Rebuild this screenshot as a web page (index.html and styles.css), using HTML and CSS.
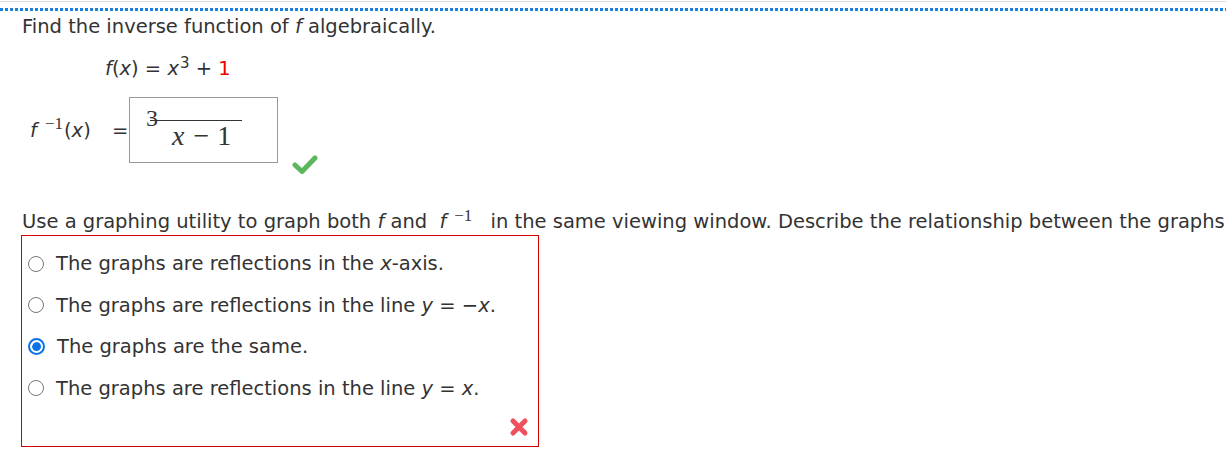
FILE: index.html
```html
<!DOCTYPE html>
<html lang="en">
<head>
    <meta charset="UTF-8">
    <title>Inverse Function</title>
    <link rel="stylesheet" href="styles.css">
</head>
<body>
    <div class="topline"></div>
    <div class="dotline"></div>
    <div class="question">
        <p class="prompt">Find the inverse function of <i>f</i> algebraically.</p>
        <div class="given"><i>f</i>(<i>x</i>) = <i>x</i><sup>3</sup> + <span class="red">1</span></div>

        <div class="answer-row">
            <span class="label"><i>f</i><sup class="mj">&minus;1</sup>(<i>x</i>)</span>
            <span class="eq">=</span>
            <div class="answer-box">
                <span class="root-index">3</span>
                <span class="radicand"><i>x</i><span class="minus">&minus;</span>1</span>
            </div>
            <svg class="check" width="26" height="20" viewBox="0 0 26 20">
                <path d="M3 10 L10 16.5 L23 3" fill="none" stroke="#5cb85c" stroke-width="5" stroke-linecap="round" stroke-linejoin="round"/>
            </svg>
        </div>

        <p class="prompt second">Use a graphing utility to graph both <i>f</i> and <span class="inv"><i>f</i><sup class="mj">&minus;1</sup></span> in the same viewing window. Describe the relationship between the graphs.</p>

        <div class="choices">
            <label class="choice"><span class="radio"></span><span>The graphs are reflections in the <i>x</i>-axis.</span></label>
            <label class="choice"><span class="radio"></span><span>The graphs are reflections in the line <i>y</i> = &minus;<i>x</i>.</span></label>
            <label class="choice"><span class="radio checked"></span><span>The graphs are the same.</span></label>
            <label class="choice"><span class="radio"></span><span>The graphs are reflections in the line <i>y</i> = <i>x</i>.</span></label>
            <svg class="cross" width="20" height="20" viewBox="0 0 20 20">
                <path d="M4 4 L16 16 M16 4 L4 16" stroke="#f0505e" stroke-width="5" stroke-linecap="round"/>
            </svg>
        </div>
    </div>
</body>
</html>
```

FILE: styles.css
```css
body {
    font-family: "DejaVu Sans", Verdana, sans-serif;
    font-size: 19.5px;
    color: #333;
    margin: 0;
    padding: 0;
    background-color: #fff;
    overflow: hidden;
}

.topline {
    height: 1px;
    margin-top: 1px;
    background-color: #ddd;
}

.dotline {
    height: 3px;
    margin-top: 6px;
    background: repeating-linear-gradient(to right, #1a80e0 0, #1a80e0 3px, transparent 3px, transparent 5px);
}

.question {
    padding: 0 22px;
}

.prompt {
    margin: 5px 0 0;
    line-height: 22px;
    white-space: nowrap;
}

.given {
    margin: 18px 0 0 83px;
    line-height: 26px;
}

.given sup {
    font-size: 15px;
    line-height: 0;
    margin-left: 1px;
}

.red {
    color: #e00;
}

.answer-row {
    display: flex;
    align-items: center;
    margin-top: 15px;
    height: 66px;
}

.label {
    margin-left: 8px;
    width: 82px;
}

.mj {
    font-family: "Liberation Serif", serif;
    font-size: 17px;
    line-height: 0;
    margin-left: 8px;
    margin-right: 1px;
}

.eq {
    width: 17px;
}

.answer-box {
    width: 147px;
    height: 64px;
    border: 1px solid #999;
    position: relative;
    font-family: "Liberation Serif", serif;
}

.root-index {
    position: absolute;
    left: 16px;
    top: 8px;
    font-size: 24px;
    line-height: 24px;
}

.radicand {
    position: absolute;
    left: 20px;
    top: 22px;
    width: 92px;
    padding-left: 22px;
    border-top: 1px solid #333;
    font-size: 28px;
    line-height: 29px;
    box-sizing: border-box;
    white-space: nowrap;
}

.radicand i {
    font-style: italic;
}

.minus {
    margin: 0 8px 0 9px;
}

.check {
    align-self: flex-end;
    margin: 0 0 -12px 14px;
}

.second {
    margin-top: 48px;
}

.inv {
    margin-left: 6px;
    margin-right: 11px;
}

.choices {
    width: 518px;
    height: 212px;
    border: 1px solid #d40000;
    margin-left: -1px;
    margin-top: 2px;
    padding-top: 7px;
    box-sizing: border-box;
    position: relative;
}

.choice {
    display: flex;
    align-items: center;
    height: 41.5px;
}

.radio {
    width: 14px;
    height: 14px;
    border: 1.5px solid #777;
    border-radius: 50%;
    margin: 0 12px 0 6px;
    box-sizing: content-box;
    flex-shrink: 0;
}

.radio.checked {
    width: 10px;
    height: 10px;
    border: 2px solid #0a73e8;
    background-color: #0a73e8;
    box-shadow: inset 0 0 0 2px #fff;
    padding: 1.5px;
    background-clip: content-box;
}

.cross {
    position: absolute;
    right: 9px;
    bottom: 9px;
}
```
